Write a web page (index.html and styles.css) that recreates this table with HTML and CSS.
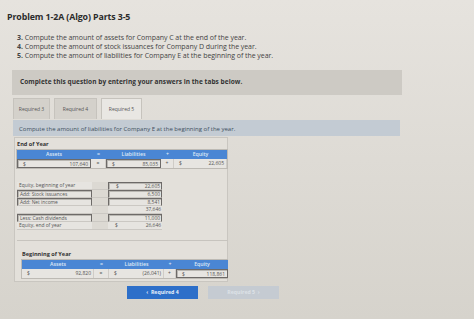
FILE: index.html
```html
<!DOCTYPE html>
<html>
<head>
<meta charset="utf-8">
<link rel="stylesheet" href="styles.css">
</head>
<body>
<div class="page">
  <h1 class="title">Problem 1-2A (Algo) Parts 3-5</h1>
  <ol class="steps">
    <li><b>3.</b> Compute the amount of assets for Company C at the end of the year.</li>
    <li><b>4.</b> Compute the amount of stock issuances for Company D during the year.</li>
    <li><b>5.</b> Compute the amount of liabilities for Company E at the beginning of the year.</li>
  </ol>
  <div class="notice">Complete this question by entering your answers in the tabs below.</div>
  <div class="tabs">
    <div class="tab">Required 3</div>
    <div class="tab">Required 4</div>
    <div class="tab active">Required 5</div>
  </div>
  <div class="instr">Compute the amount of liabilities for Company E at the beginning of the year.</div>
  <div class="panel">
    <div class="caption">End of Year</div>
    <div class="eq eq-end">
      <div class="hd">Assets</div><div class="hd">=</div><div class="hd">Liabilities</div><div class="hd">+</div><div class="hd">Equity</div>
      <div class="cell inp"><span>$</span><span>107,640</span></div>
      <div class="cell op">=</div>
      <div class="cell inp"><span>$</span><span>85,035</span></div>
      <div class="cell op">+</div>
      <div class="cell"><span>$</span><span>22,605</span></div>
    </div>
    <div class="equity">
      <div class="lbl">Equity, beginning of year</div><div class="gap"></div><div class="amt inp"><span>$</span><span>22,605</span></div>
      <div class="lbl inp">Add: Stock issuances</div><div class="gap"></div><div class="amt inp"><span></span><span>6,500</span></div>
      <div class="lbl inp">Add: Net income</div><div class="gap"></div><div class="amt inp"><span></span><span>8,541</span></div>
      <div class="lbl blank"></div><div class="gap"></div><div class="amt"><span></span><span>37,646</span></div>
      <div class="lbl inp">Less: Cash dividends</div><div class="gap"></div><div class="amt inp"><span></span><span>11,000</span></div>
      <div class="lbl">Equity, end of year</div><div class="gap"></div><div class="amt"><span>$</span><span>26,646</span></div>
    </div>
    <div class="caption cap2">Beginning of Year</div>
    <div class="eq eq-beg">
      <div class="hd">Assets</div><div class="hd">=</div><div class="hd">Liabilities</div><div class="hd">+</div><div class="hd">Equity</div>
      <div class="cell"><span>$</span><span>92,820</span></div>
      <div class="cell op">=</div>
      <div class="cell"><span>$</span><span>(26,041)</span></div>
      <div class="cell op">+</div>
      <div class="cell inp"><span>$</span><span>118,861</span></div>
    </div>
  </div>
  <div class="nav">
    <div class="btn prev">&lsaquo;&nbsp;&nbsp;Required 4</div>
    <div class="btn next">Required 5&nbsp;&nbsp;&rsaquo;</div>
  </div>
</div>
</body>
</html>
```
FILE: styles.css
```css
* { box-sizing: border-box; margin: 0; padding: 0; }
html, body { width: 474px; height: 319px; overflow: hidden; }
body {
  background: linear-gradient(180deg, #e6e3de 0%, #dedbd5 50%, #d6d3cc 100%);
  font-family: "Open Sans", "Liberation Sans", sans-serif;
  color: #3a3a3a;
}
.page { padding: 11px 0 0 7px; }
.title { font-size: 8.8px; font-weight: 700; color: #2b2b2b; line-height: 12px; letter-spacing: -0.1px; }
.steps { list-style: none; margin: 10px 0 0 10px; font-size: 7px; line-height: 9px; color: #444; letter-spacing: -0.05px; }
.steps b { font-weight: 700; }
.notice {
  margin: 10px 0 0 5px; width: 390px; height: 25px;
  background: #cdcac4; font-size: 6.5px; font-weight: 700; color: #333;
  padding: 7px 0 0 8px; letter-spacing: 0.05px;
}
.tabs { display: flex; gap: 4px; margin: 3px 0 0 6px; height: 21px; }
.tab {
  background: #d4d1cb; border: 1px solid #c6c3bd; border-bottom: none;
  font-size: 5px; color: #555; padding: 7px 0 0; height: 21px; white-space: nowrap; text-align: center;
}
.tab:nth-child(1) { width: 37px; }
.tab:nth-child(2) { width: 43px; }
.tab.active { background: #e9e7e3; width: 41px; }
.instr {
  margin: 1px 0 0 6px; width: 387px; height: 16px;
  background: #c3cbd3; font-size: 6px; color: #40505e; padding: 5px 0 0 6px;
}
.panel {
  margin: 1px 0 0 7px; width: 214px;
  border: 1px solid #c9c6c0; background: #e3e0da; padding: 2px 1px 2px 1px;
}
.caption { font-size: 5.6px; font-weight: 700; color: #333; height: 9px; line-height: 9px; padding-left: 1px; }
.eq { display: grid; border: 1px solid #bdbab4; background: #e7e5e1; }
.eq-end { grid-template-columns: 74px 15px 55px 13px 53px; width: 212px; }
.eq-beg { grid-template-columns: 72px 15px 55px 12px 52px; width: 207px; margin-left: 5px; }
.hd { background: #4a86d4; color: #dfe9f6; font-size: 5.2px; text-align: center; height: 9px; line-height: 9px; font-weight: 600; }
.cell { display: flex; justify-content: space-between; font-size: 5px; color: #555; height: 9px; line-height: 8px; padding: 0 2px 0 5px; border-right: 1px solid #cfccc7; }
.cell.op { justify-content: center; padding: 0; }
.inp { border: 1px solid #6d6a68; box-shadow: inset 1px 1px 0 #b9b7b2; }
.equity {
  display: grid; grid-template-columns: 75px 16px 54px; grid-auto-rows: 8px;
  margin: 13px 0 0 1px; width: 211px; padding-bottom: 10px;
  border-bottom: 1px solid #c7c4be; font-size: 4.9px; color: #555;
}
.lbl { padding-left: 2px; line-height: 7px; border-bottom: 1px solid #cbc8c3; background: #e6e4e0; }
.gap { background: #dcd9d3; border-bottom: 1px solid #cbc8c3; }
.amt { display: flex; justify-content: space-between; padding: 0 1px 0 7px; line-height: 7px; border-bottom: 1px solid #cbc8c3; background: #e6e4e0; }
.cap2 { margin: 9px 0 0 5px; height: 9px; }
.nav { display: flex; gap: 10px; margin: 4px 0 0 120px; }
.btn { height: 13px; width: 71px; font-size: 5.2px; font-weight: 700; text-align: center; line-height: 13px; }
.prev { background: #2d6fc9; color: #e8f0fb; }
.next { background: #c5cbd2; color: #dde2e7; }
```
